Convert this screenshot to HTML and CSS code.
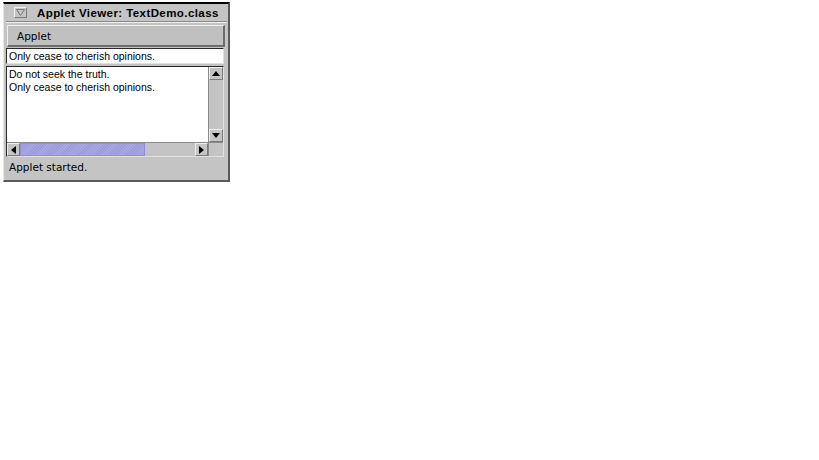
FILE: index.html
```html
<!DOCTYPE html>
<html>
<head>
<meta charset="utf-8">
<link rel="stylesheet" href="styles.css">
</head>
<body>
<div class="window">
  <div class="titlebar">
    <div class="menubtn"><svg width="9" height="7" viewBox="0 0 9 7"><path d="M0.5 0.5 H8.5 L4.5 6.5 Z" fill="none" stroke="#7a7a7a" stroke-width="1"/></svg></div>
    <div class="title">Applet Viewer: TextDemo.class</div>
  </div>
  <div class="content">
    <div class="appletbtn">Applet</div>
    <div class="textfield">Only cease to cherish opinions.</div>
    <div class="textarea">
      <div class="ta-main">
        <div class="ta-text">Do not seek the truth.<br>Only cease to cherish opinions.</div>
        <div class="vscroll">
          <div class="arrow"><svg width="8" height="5" viewBox="0 0 8 5"><path d="M0 5 L4 0 L8 5 Z" fill="#000"/></svg></div>
          <div class="vtrack"></div>
          <div class="arrow"><svg width="8" height="5" viewBox="0 0 8 5"><path d="M0 0 L4 5 L8 0 Z" fill="#000"/></svg></div>
        </div>
      </div>
      <div class="hrow">
        <div class="hscroll">
          <div class="arrow h"><svg width="5" height="8" viewBox="0 0 5 8"><path d="M5 0 L0 4 L5 8 Z" fill="#000"/></svg></div>
          <div class="htrack"><div class="thumb"></div></div>
          <div class="arrow h"><svg width="5" height="8" viewBox="0 0 5 8"><path d="M0 0 L5 4 L0 8 Z" fill="#000"/></svg></div>
        </div>
        <div class="corner"></div>
      </div>
    </div>
    <div class="status">Applet started.</div>
  </div>
</div>
</body>
</html>
```
FILE: styles.css
```css
html, body {
  margin: 0;
  padding: 0;
  background: #ffffff;
}
body {
  padding: 2px 0 0 3px;
}
.window {
  width: 227px;
  height: 180px;
  box-sizing: border-box;
  background: #c4c4c4;
  border-top: 2px solid #000;
  border-left: 1px solid #e8e8e8;
  border-right: 2px solid #5a5a5a;
  border-bottom: 2px solid #5a5a5a;
  display: flex;
  flex-direction: column;
  font-family: "DejaVu Sans", sans-serif;
}
.titlebar {
  height: 17px;
  display: flex;
  align-items: center;
  margin: 0 1px 0 2px;
  border-bottom: 1px solid #8a8a8a;
  box-shadow: 0 1px 0 #eeeeee;
}
.menubtn {
  width: 13px;
  height: 11px;
  margin-left: 8px;
  box-sizing: border-box;
  border-top: 1px solid #f0f0f0;
  border-left: 1px solid #f0f0f0;
  border-right: 1px solid #7a7a7a;
  border-bottom: 1px solid #7a7a7a;
  display: flex;
  align-items: center;
  justify-content: center;
}
.title {
  margin-left: 10px;
  font-family: "Liberation Sans", Arial, sans-serif;
  font-weight: bold;
  font-size: 11.5px;
  letter-spacing: 0.42px;
  color: #000;
  white-space: nowrap;
}
.content {
  flex: 1;
  display: flex;
  flex-direction: column;
  padding: 3px 4px 0 2px;
}
.appletbtn {
  height: 22px;
  box-sizing: border-box;
  margin-left: 1px;
  margin-right: -1px;
  border-top: 1px solid #eeeeee;
  border-left: 1px solid #eeeeee;
  border-right: 2px solid #6e6e6e;
  border-bottom: 2px solid #6e6e6e;
  background: #c0c0c0;
  font-size: 10.5px;
  padding-left: 9px;
  line-height: 20px;
  color: #000;
}
.textfield {
  margin-top: 1px;
  height: 16px;
  box-sizing: border-box;
  background: #fff;
  border-top: 1px solid #2a2a2a;
  border-left: 1px solid #2a2a2a;
  border-right: 1px solid #e0e0e0;
  border-bottom: 1px solid #e0e0e0;
  font-family: "Liberation Sans", Arial, sans-serif;
  font-size: 10.5px;
  line-height: 14px;
  padding-left: 2px;
  white-space: nowrap;
  overflow: hidden;
}
.textarea {
  margin-top: 2px;
  height: 91px;
  box-sizing: border-box;
  background: #fff;
  border-top: 1px solid #2a2a2a;
  border-left: 1px solid #2a2a2a;
  border-right: 1px solid #e0e0e0;
  border-bottom: 1px solid #e0e0e0;
  display: flex;
  flex-direction: column;
}
.ta-main {
  flex: 1;
  display: flex;
}
.ta-text {
  flex: 1;
  font-family: "Liberation Sans", Arial, sans-serif;
  font-size: 10.5px;
  line-height: 13px;
  padding: 1px 0 0 2px;
  white-space: nowrap;
  overflow: hidden;
}
.vscroll {
  width: 14px;
  display: flex;
  flex-direction: column;
  background: #c4c4c4;
  border-left: 1px solid #8a8a8a;
}
.arrow {
  height: 13px;
  box-sizing: border-box;
  border-top: 1px solid #eeeeee;
  border-left: 1px solid #eeeeee;
  border-right: 1px solid #7a7a7a;
  border-bottom: 1px solid #7a7a7a;
  background: #c4c4c4;
  display: flex;
  align-items: center;
  justify-content: center;
}
.arrow.h {
  width: 13px;
  height: auto;
}
.vtrack {
  flex: 1;
  background: #c4c4c4;
}
.hrow {
  height: 13px;
  display: flex;
  border-top: 1px solid #8a8a8a;
  background: #c4c4c4;
}
.hscroll {
  flex: 1;
  display: flex;
}
.htrack {
  flex: 1;
  display: flex;
  background: #c4c4c4;
}
.thumb {
  width: 125px;
  box-sizing: border-box;
  border: 1px solid #9090d0;
  background: repeating-linear-gradient(135deg, #9c9cdc 0px, #9c9cdc 1px, #a8a8e4 1px, #a8a8e4 2px);
}
.corner {
  width: 15px;
  background: #c4c4c4;
  border-left: 1px solid #8a8a8a;
  box-sizing: border-box;
}
.status {
  flex: 1;
  font-size: 10.5px;
  padding-left: 3px;
  padding-bottom: 3px;
  display: flex;
  align-items: center;
  color: #000;
}
```
